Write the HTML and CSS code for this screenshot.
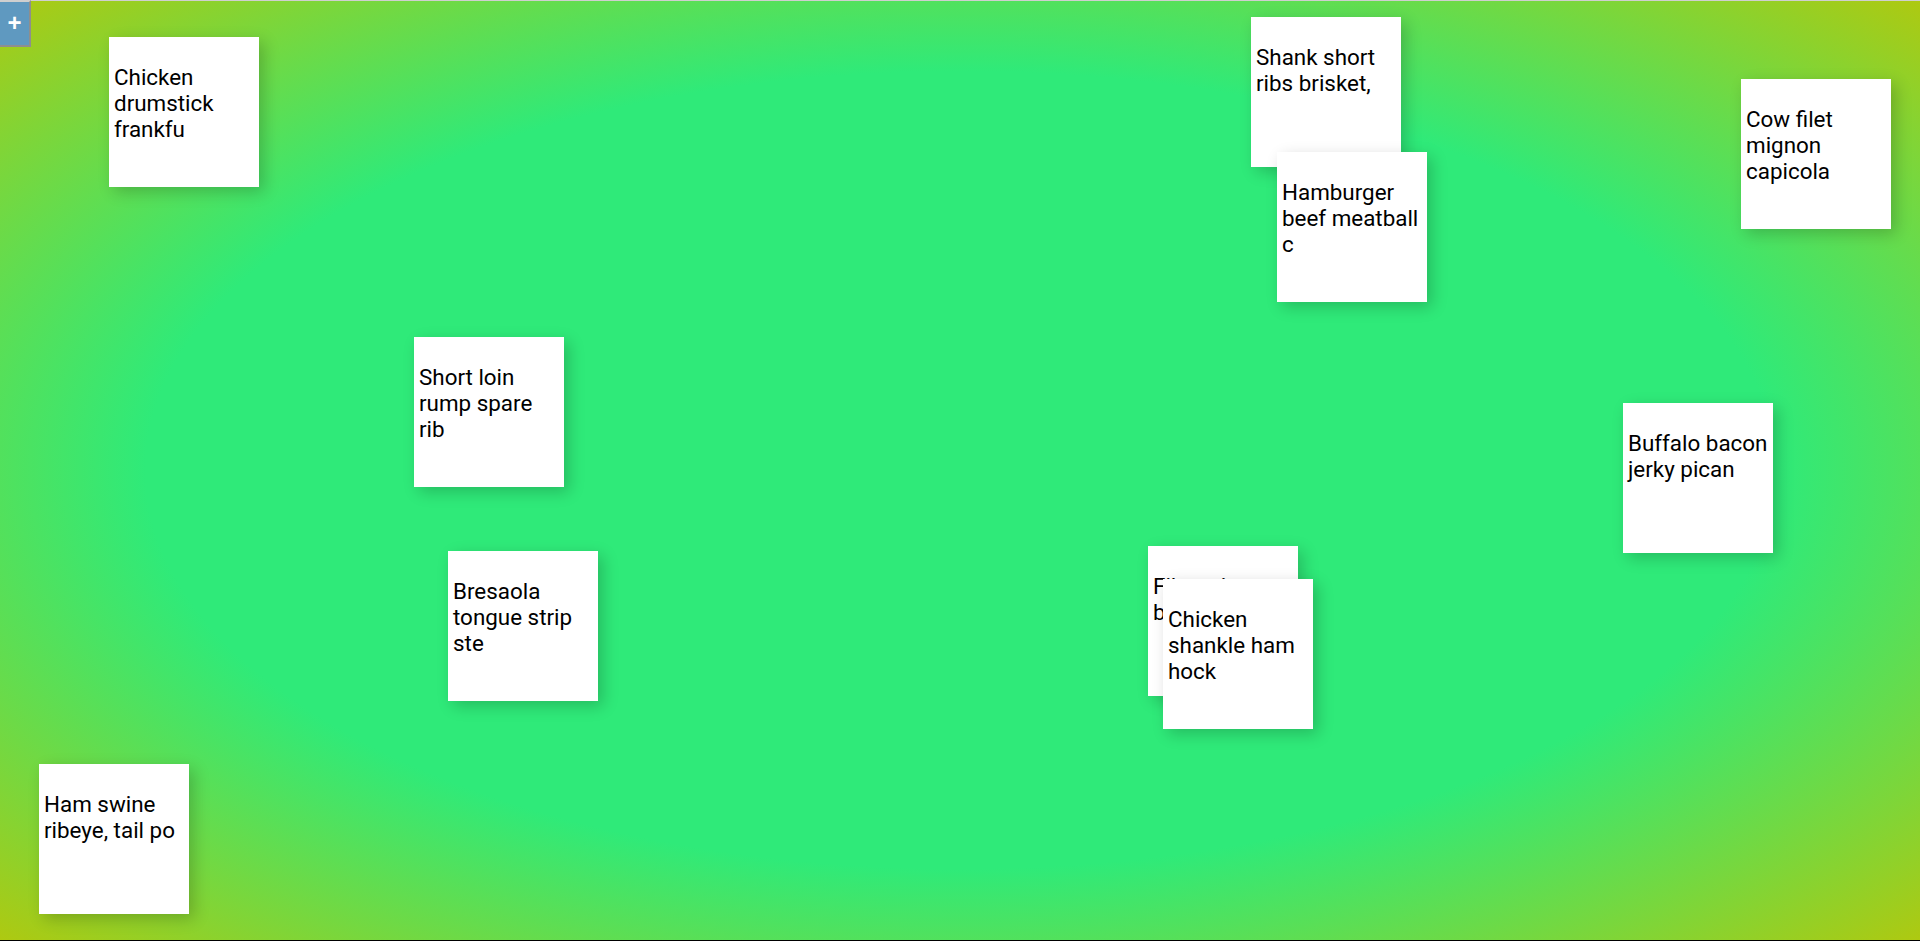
FILE: index.html
```html
<!DOCTYPE html>
<html lang="en">
<head>
<meta charset="utf-8">
<title>Bulletin Board</title>
<link rel="stylesheet" href="styles.css">
</head>
<body>
<div class="board">
  <button class="add-btn" type="button">+</button>
  <div class="note" style="left:109px;top:37px"><p>Chicken drumstick frankfu</p></div>
  <div class="note" style="left:1251px;top:17px"><p>Shank short ribs brisket,</p></div>
  <div class="note" style="left:1277px;top:152px"><p>Hamburger beef meatball c</p></div>
  <div class="note" style="left:1741px;top:79px"><p>Cow filet mignon capicola</p></div>
  <div class="note" style="left:414px;top:337px"><p>Short loin rump spare rib</p></div>
  <div class="note" style="left:1623px;top:403px"><p>Buffalo bacon jerky pican</p></div>
  <div class="note" style="left:448px;top:551px"><p>Bresaola tongue strip ste</p></div>
  <div class="note" style="left:1148px;top:546px"><p>Filet mignon beef ribs tu</p></div>
  <div class="note" style="left:1163px;top:579px"><p>Chicken shankle ham hock</p></div>
  <div class="note" style="left:39px;top:764px"><p>Ham swine ribeye, tail po</p></div>
</div>
</body>
</html>
```

FILE: styles.css
```css
html, body {
  margin: 0;
  padding: 0;
  height: 100%;
  overflow: hidden;
  background: #000;
}

.board {
  position: relative;
  width: 100%;
  height: 940px;
  background: radial-gradient(ellipse at center, #2fea79 0%, #2fea79 60%, #aec911 100%);
  box-shadow: inset 0 1px 0 #cfcfcf;
  font-family: Roboto, "Liberation Sans", Arial, sans-serif;
}

.add-btn {
  display: flex;
  align-items: center;
  justify-content: center;
  box-sizing: content-box;
  width: 29px;
  height: 41px;
  margin: 0;
  padding: 0 0 2px 0;
  border: none;
  border-top: 2px solid #cfcfcf;
  border-right: 2px solid #8e8e8e;
  border-bottom: 2px solid #8e8e8e;
  background: #5f99c0;
  color: #fff;
  font-family: "Liberation Sans", Arial, sans-serif;
  font-size: 24px;
  font-weight: bold;
  line-height: 1;
  cursor: pointer;
}

.note {
  position: absolute;
  width: 150px;
  height: 150px;
  background: #fff;
  box-shadow: 5px 5px 15px 0 rgba(0, 0, 0, 0.2);
}

.note p {
  margin: 22.4px 0;
  padding: 5px;
  font-size: 22.4px;
  line-height: normal;
  color: #000;
}
```
